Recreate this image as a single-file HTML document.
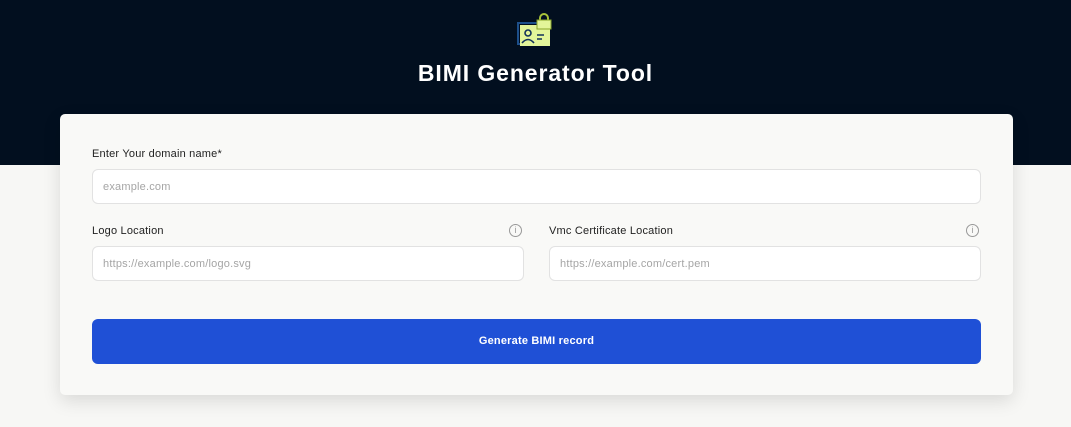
<!DOCTYPE html>
<html><head><style>
*{box-sizing:border-box;margin:0;padding:0}
body{width:1071px;height:427px;background:#f7f7f5;font-family:"Liberation Sans",sans-serif;position:relative;overflow:hidden}
.hdr{position:absolute;left:0;top:0;width:1071px;height:165px;background:#020f1f}
h1{position:absolute;top:60px;left:0;width:1071px;text-align:center;color:#fff;font-size:23px;font-weight:bold;letter-spacing:0.9px}
.card{position:absolute;left:60px;top:114px;width:953px;height:281px;background:#f9f9f7;border-radius:5px;box-shadow:0 6px 18px rgba(0,0,0,0.12)}
label{position:absolute;font-size:11px;color:#222;letter-spacing:0.2px}
.in{position:absolute;background:#fff;border:1px solid #e2e2e2;border-radius:6px;height:35px;font-size:11px;color:#a5a5a5;padding:11px 0 0 10px;letter-spacing:0.2px}
.info{position:absolute;width:13px;height:13px;border:1px solid #999;border-radius:50%;font-size:9px;color:#999;text-align:center;line-height:11px}
.btn{position:absolute;left:32px;top:205px;width:889px;height:45px;background:#1f50d6;border-radius:6px;color:#fff;font-size:11px;font-weight:bold;text-align:center;line-height:45px;letter-spacing:0.2px}
</style></head><body>
<div class="hdr"></div>
<svg style="position:absolute;left:515px;top:12px" width="40" height="38" viewBox="0 0 40 38">
<rect x="3" y="11" width="30" height="21" fill="none" stroke="#1d4f8a" stroke-width="2"/>
<rect x="5" y="13" width="30" height="21" fill="#e3f59a"/>
<circle cx="13" cy="21" r="3" fill="none" stroke="#12325a" stroke-width="1.6"/>
<path d="M7 31 q6 -7 12 0" fill="none" stroke="#12325a" stroke-width="1.6"/>
<path d="M22 23 h7 M22 27 h5" stroke="#12325a" stroke-width="1.6"/>
<path d="M25 9 v-3 a4 4 0 0 1 8 0 v3" fill="none" stroke="#a8c23a" stroke-width="2"/>
<rect x="22" y="8" width="14" height="9" fill="#e3f59a" stroke="#8aa52a" stroke-width="1"/>
</svg>
<h1>BIMI Generator Tool</h1>
<div class="card">
<label style="left:32px;top:34px">Enter Your domain name*</label>
<div class="in" style="left:32px;top:55px;width:889px">example.com</div>
<label style="left:32px;top:111px">Logo Location</label>
<div class="info" style="left:449px;top:110px">i</div>
<div class="in" style="left:32px;top:132px;width:432px">https://example.com/logo.svg</div>
<label style="left:489px;top:111px">Vmc Certificate Location</label>
<div class="info" style="left:906px;top:110px">i</div>
<div class="in" style="left:489px;top:132px;width:432px">https://example.com/cert.pem</div>
<div class="btn">Generate BIMI record</div>
</div>
</body></html>
